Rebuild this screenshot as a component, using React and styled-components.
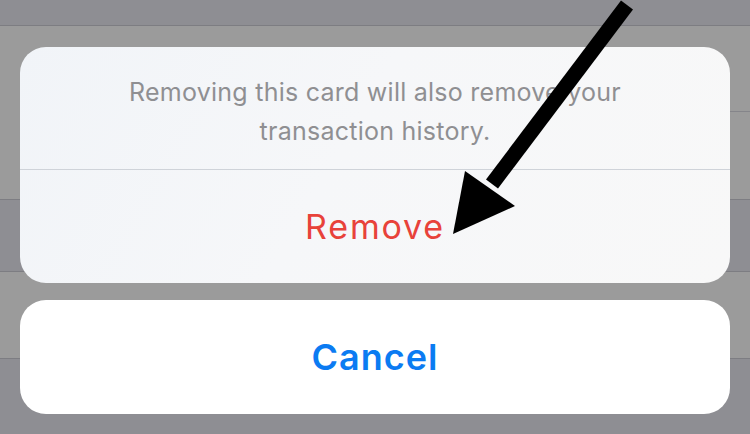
import styled, { createGlobalStyle } from 'styled-components';

const GlobalStyle = createGlobalStyle`
  html, body {
    margin: 0;
    padding: 0;
    background: #8e8e93;
    overflow: hidden;
  }
  * {
    box-sizing: border-box;
  }
`;

const Screen = styled.div`
  position: relative;
  width: 750px;
  height: 434px;
  overflow: hidden;
  font-family: Inter, 'Liberation Sans', sans-serif;
`;

// dimmed table view sitting behind the action sheet
const Backdrop = styled.div`
  display: flex;
  flex-direction: column;
`;

const Band = styled.div`
  height: ${(p) => p.h}px;
  background: ${(p) => (p.cell ? '#9b9b9b' : '#8e8e93')};
  border-bottom: ${(p) => (p.line ? '1px solid #7d7d82' : 'none')};
  padding-left: ${(p) => p.inset || 0}px;
  display: flex;
  flex-direction: column;
  justify-content: flex-end;
`;

const Separator = styled.div`
  height: 1px;
  margin-bottom: 87px;
  background: #85858a;
`;

const Sheet = styled.div`
  position: absolute;
  left: 20px;
  right: 20px;
  bottom: 20px;
  display: flex;
  flex-direction: column;
  gap: 17px;
`;

const Group = styled.div`
  border-radius: 26px;
  overflow: hidden;
  background: linear-gradient(120deg, #f1f4f8 0%, #f6f7f9 45%, #f8f8f8 100%);
  display: flex;
  flex-direction: column;
`;

const Message = styled.div`
  height: 123px;
  padding: 26px 70px 0;
  text-align: center;
  color: #8f8f92;
  font-size: 25px;
  letter-spacing: 0.25px;
  line-height: 39px;
  border-bottom: 1px solid #cfd3d9;
`;

const Action = styled.button`
  height: ${(p) => p.h}px;
  width: 100%;
  border: none;
  background: ${(p) => (p.cancel ? '#ffffff' : 'transparent')};
  border-radius: ${(p) => (p.cancel ? '26px' : '0')};
  font-family: inherit;
  font-size: ${(p) => (p.cancel ? 36 : 34)}px;
  font-weight: ${(p) => (p.cancel ? 600 : 400)};
  letter-spacing: ${(p) => (p.cancel ? 1 : 1.8)}px;
  color: ${(p) => (p.cancel ? '#0b7bf2' : '#e8423a')};
  padding: 0;
  cursor: pointer;
`;

const Arrow = styled.svg`
  position: absolute;
  left: 0;
  top: 0;
  pointer-events: none;
`;

const App = () => {
  return (
    <Screen>
      <GlobalStyle />
      <Backdrop>
        <Band h={26} line />
        <Band h={174} cell line inset={200}>
          <Separator />
        </Band>
        <Band h={72} line />
        <Band h={87} cell line />
        <Band h={75} />
      </Backdrop>

      <Sheet>
        <Group>
          <Message>Removing this card will also remove your transaction history.</Message>
          <Action h={113}>Remove</Action>
        </Group>
        <Action h={114} cancel>
          Cancel
        </Action>
      </Sheet>

      <Arrow width="750" height="434" viewBox="0 0 750 434">
        <line x1="627" y1="5" x2="492" y2="184" stroke="#000" strokeWidth="15" />
        <polygon points="465,171 515,206 453,234" fill="#000" />
      </Arrow>
    </Screen>
  );
};

export default App;
